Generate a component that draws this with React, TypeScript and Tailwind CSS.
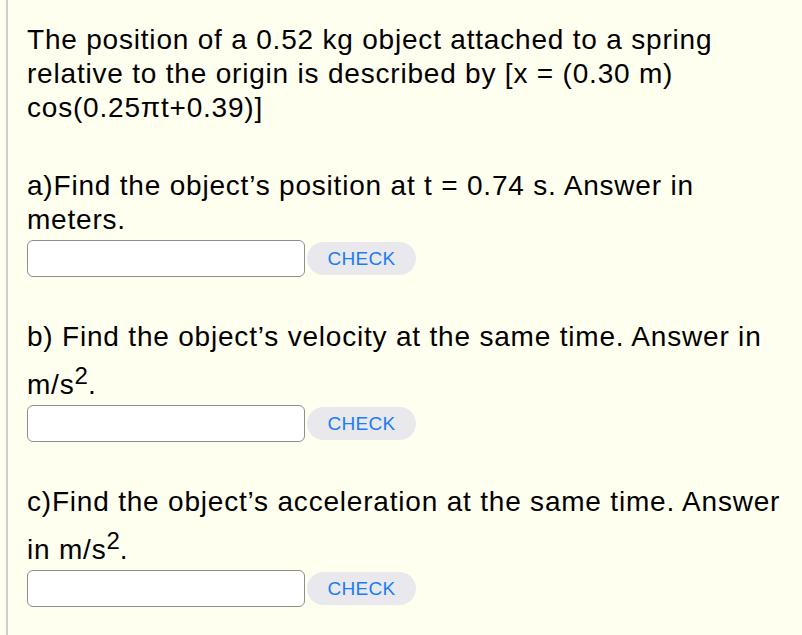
export default function App() {
    const font = { fontFamily: '"Liberation Sans", Arial, Helvetica, sans-serif' };

    const AnswerRow = () => (
        <div className="flex items-center mt-[3px]">
            <input
                type="text"
                className="w-[278px] h-[37px] bg-white border-[1.5px] border-[#8e8e8e] rounded-[6px] outline-none"
            />
            <button className="ml-[2px] h-[33px] w-[109px] rounded-full bg-[#e9e9ed] text-[#1a7cf7] text-[19px] tracking-[0.3px]">
                CHECK
            </button>
        </div>
    );

    // 上付きの「2」（行の高さを広げるため margin-top を付ける）
    const Sq = () => (
        <span className="inline-block mt-[10px] text-[24px] leading-[24px] align-[10px] tracking-normal">2</span>
    );

    return (
        <div className="min-h-screen bg-[#fffff0] pl-[6px] overflow-hidden" style={font}>
            <div className="min-h-screen border-l-2 border-[#cfcfcf] pl-[19px] pr-[18px] pt-[23px] pb-8 text-[28px] leading-[34px] tracking-[0.8px] text-black">
                {/* 問題文 */}
                <p>
                    The position of a 0.52 kg object attached to a spring relative to the origin is described by [x = (0.30 m) cos(0.25πt+0.39)]
                </p>

                {/* a) */}
                <p className="mt-[44px]">a)Find the object’s position at t = 0.74 s. Answer in meters.</p>
                <AnswerRow />

                {/* b) */}
                <p className="mt-[43px]">
                    b) Find the object’s velocity at the same time. Answer in m/s<Sq />.
                </p>
                <AnswerRow />

                {/* c) */}
                <p className="mt-[43px]">
                    c)Find the object’s acceleration at the same time. Answer in m/s<Sq />.
                </p>
                <AnswerRow />
            </div>
        </div>
    );
}
